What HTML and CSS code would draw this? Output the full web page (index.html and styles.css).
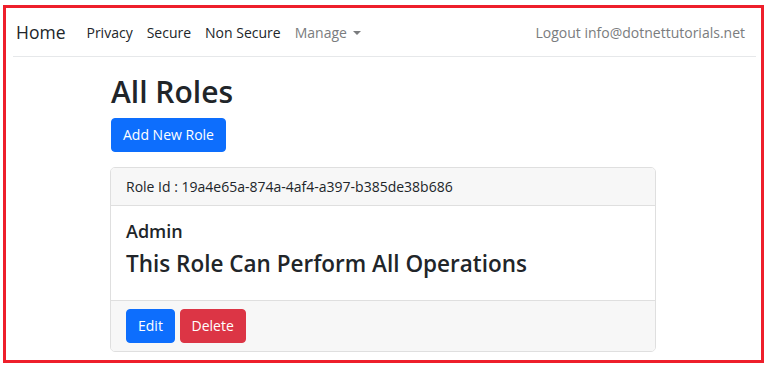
FILE: index.html
```html
<!DOCTYPE html>
<html lang="en">
<head>
<meta charset="utf-8">
<title>All Roles</title>
<link rel="stylesheet" href="styles.css">
</head>
<body>
<div class="frame">
  <nav class="navbar">
    <a class="brand" href="#">Home</a>
    <ul class="nav-left">
      <li><a class="nav-link" href="#">Privacy</a></li>
      <li><a class="nav-link" href="#">Secure</a></li>
      <li><a class="nav-link" href="#">Non Secure</a></li>
      <li><a class="nav-link muted dropdown" href="#">Manage<span class="caret"></span></a></li>
    </ul>
    <ul class="nav-right">
      <li><a class="nav-link muted" href="#">Logout info@dotnettutorials.net</a></li>
    </ul>
  </nav>
  <main class="main">
    <h1 class="title">All Roles</h1>
    <a class="btn btn-primary" href="#">Add New Role</a>
    <div class="card">
      <div class="card-header">Role Id : 19a4e65a-874a-4af4-a397-b385de38b686</div>
      <div class="card-body">
        <h5 class="role-name">Admin</h5>
        <h4 class="role-desc">This Role Can Perform All Operations</h4>
      </div>
      <div class="card-footer">
        <a class="btn btn-primary" href="#">Edit</a>
        <a class="btn btn-danger" href="#">Delete</a>
      </div>
    </div>
  </main>
</div>
</body>
</html>
```

FILE: styles.css
```css
* { box-sizing: border-box; }
html, body { margin: 0; padding: 0; background: #fff; }
body {
  font-family: "Open Sans", "Noto Sans", "Liberation Sans", sans-serif;
  font-size: 14px;
  color: #212529;
}
a { text-decoration: none; }
ul { list-style: none; margin: 0; padding: 0; }

.frame {
  margin: 5px 0 0 3px;
  width: 761px;
  height: 358px;
  border: 3px solid #ee1f2b;
  overflow: hidden;
}

.navbar {
  display: flex;
  align-items: center;
  height: 49px;
  margin: 0 5px 0 7px;
  padding: 0 4px 0 3px;
  border-bottom: 1px solid #e6e8ea;
}
.brand {
  font-size: 17.5px;
  color: #212529;
  margin-right: 14px;
}
.nav-left, .nav-right { display: flex; align-items: center; }
.nav-left { flex: 1; }
.nav-link {
  display: block;
  padding: 0 7px;
  color: #212529;
  font-size: 14px;
}
.nav-link.muted { color: #7a7c7e; }
.caret {
  display: inline-block;
  margin-left: 6px;
  vertical-align: 3px;
  border-top: 4px solid #7a7c7e;
  border-left: 4px solid transparent;
  border-right: 4px solid transparent;
}

.main {
  margin-left: 104px;
  width: 546px;
  padding-top: 17px;
}
.title {
  margin: 0 0 8px 1px;
  font-size: 30px;
  font-weight: 600;
  line-height: 1.2;
}
.btn {
  display: inline-block;
  padding: 5px 11px;
  font-size: 14px;
  line-height: 22px;
  border: 1px solid transparent;
  border-radius: 4px;
  color: #fff;
}
.main > .btn { margin-left: 1px; }
.btn-primary { background: #0d6efd; border-color: #0d6efd; }
.btn-danger { background: #dc3545; border-color: #dc3545; margin-left: 1px; }

.card {
  margin-top: 15px;
  border: 1px solid #dfdfdf;
  border-radius: 5px;
  overflow: hidden;
}
.card-header {
  padding: 8px 15px;
  line-height: 21px;
  background: #f7f7f7;
  border-bottom: 1px solid #dfdfdf;
  font-size: 14px;
}
.card-body { padding: 15px 15px 15px; }
.role-name {
  margin: 0 0 7px;
  font-size: 18px;
  font-weight: 600;
  line-height: 1.2;
}
.role-desc {
  margin: 0 0 8px;
  font-size: 22.5px;
  font-weight: 600;
  line-height: 1.2;
}
.card-footer {
  padding: 8px 15px;
  background: #f7f7f7;
  border-top: 1px solid #dfdfdf;
}
```
